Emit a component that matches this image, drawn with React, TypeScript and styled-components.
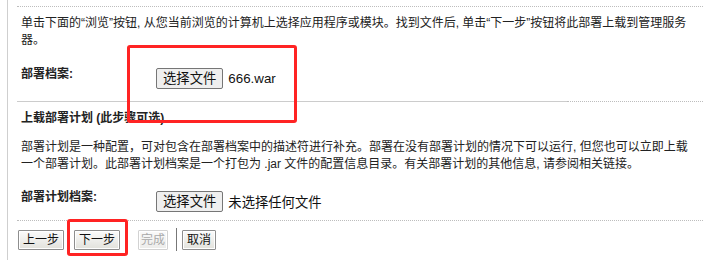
import React from 'react';
import styled, { createGlobalStyle } from 'styled-components';

const GlobalStyle = createGlobalStyle`
  html, body {
    margin: 0;
    padding: 0;
    background: #fff;
  }
  body {
    font-family: 'Liberation Sans', 'Noto Sans CJK SC', sans-serif;
    font-size: 12px;
    color: #222;
  }
`;

const Page = styled.div`
  position: relative;
  width: 712px;
  height: 260px;
  padding-left: 7px;
  box-sizing: border-box;
  overflow: hidden;
`;

const Frame = styled.div`
  height: 100%;
  border-left: 1px solid #cfcfcf;
  padding: 6px 9px 0 9px;
  box-sizing: border-box;
`;

const Content = styled.div`
  width: 686px;
`;

const Section = styled.div<{ $dotted?: boolean; $bottom: number }>`
  border-top: ${({ $dotted }) => ($dotted ? '1px dotted #bdbdbd' : 'none')};
  padding: 8px 14px ${({ $bottom }) => $bottom}px 4px;
`;

const Rule = styled.div`
  display: flex;
`;

const SolidRule = styled.span`
  width: 550px;
  border-top: 1px solid #cccccc;
`;

const DottedRule = styled.span`
  flex: 1;
  border-top: 1px dotted #bdbdbd;
`;

const Text = styled.p<{ $top?: number }>`
  margin: ${({ $top }) => $top ?? 0}px 0 0;
  line-height: 17px;
`;

const Heading = styled.h3`
  margin: 0;
  font-size: 12px;
  font-weight: bold;
  line-height: 17px;
`;

const FieldRow = styled.div<{ $top: number }>`
  display: grid;
  grid-template-columns: 135px auto;
  align-items: start;
  margin-top: ${({ $top }) => $top}px;
`;

const Label = styled.label`
  font-weight: bold;
  line-height: 17px;
`;

const FilePicker = styled.div`
  display: flex;
  align-items: center;
  gap: 5px;
  margin-top: 2px;
  font-size: 13.33px;
`;

const FileButton = styled.button`
  height: 21px;
  padding: 0 6px;
  font-family: 'Liberation Sans', 'Noto Sans CJK SC', sans-serif;
  font-size: 13.33px;
  color: #111;
  background: #efefef;
  border: 1px solid #767676;
  border-radius: 2px;
  line-height: 19px;
`;

const FileName = styled.span`
  color: #111;
`;

const Actions = styled.div`
  display: flex;
  align-items: center;
  border-top: 1px dotted #bdbdbd;
  padding: 7px 0 0 1px;
`;

const StepButton = styled.button<{ $gap?: number }>`
  height: 20px;
  margin-left: ${({ $gap }) => $gap ?? 0}px;
  padding: 0 4px;
  font-family: 'Liberation Sans', 'Noto Sans CJK SC', sans-serif;
  font-size: 12px;
  line-height: 18px;
  color: #111;
  background: linear-gradient(#fbfbfb, #e2e2dc);
  border: 1px solid #8e8e8e;
  border-radius: 1px;
  box-shadow: inset 0 0 0 1px #fff;

  &:disabled {
    padding: 0 2px;
    color: #a9a9a9;
    border-color: #d2d2d2;
    background: linear-gradient(#fafafa, #ececea);
  }
`;

const Separator = styled.span`
  width: 1px;
  height: 23px;
  margin: 0 5px 0 8px;
  background: #777;
`;

const Callout = styled.div<{ $x: number; $y: number; $w: number; $h: number }>`
  position: absolute;
  left: ${({ $x }) => $x}px;
  top: ${({ $y }) => $y}px;
  width: ${({ $w }) => $w}px;
  height: ${({ $h }) => $h}px;
  border: 3px solid #ff2323;
  border-radius: 3px;
  box-sizing: border-box;
  pointer-events: none;
`;

const App: React.FC = (): JSX.Element => {
  return (
    <Page>
      <GlobalStyle />
      <Frame>
        <Content>
          <Section $dotted $bottom={12}>
            <Text>
              单击下面的“浏览”按钮, 从您当前浏览的计算机上选择应用程序或模块。找到文件后, 单击“下一步”按钮将此部署上载到管理服务器。
            </Text>
            <FieldRow $top={17}>
              <Label>部署档案:</Label>
              <FilePicker>
                <FileButton>选择文件</FileButton>
                <FileName>666.war</FileName>
              </FilePicker>
            </FieldRow>
          </Section>
          <Rule>
            <SolidRule />
            <DottedRule />
          </Rule>
          <Section $bottom={8}>
            <Heading>上载部署计划 (此步骤可选)</Heading>
            <Text $top={12}>
              部署计划是一种配置，可对包含在部署档案中的描述符进行补充。部署在没有部署计划的情况下可以运行, 但您也可以立即上载一个部署计划。此部署计划档案是一个打包为 .jar 文件的配置信息目录。有关部署计划的其他信息, 请参阅相关链接。
            </Text>
            <FieldRow $top={16}>
              <Label>部署计划档案:</Label>
              <FilePicker>
                <FileButton>选择文件</FileButton>
                <FileName>未选择任何文件</FileName>
              </FilePicker>
            </FieldRow>
          </Section>
          <Actions>
            <StepButton>上一步</StepButton>
            <StepButton $gap={10}>下一步</StepButton>
            <StepButton $gap={18} disabled>
              完成
            </StepButton>
            <Separator />
            <StepButton>取消</StepButton>
          </Actions>
        </Content>
      </Frame>
      <Callout $x={127} $y={45} $w={170} $h={78} />
      <Callout $x={67} $y={219} $w={61} $h={37} />
    </Page>
  );
};

export default App;
